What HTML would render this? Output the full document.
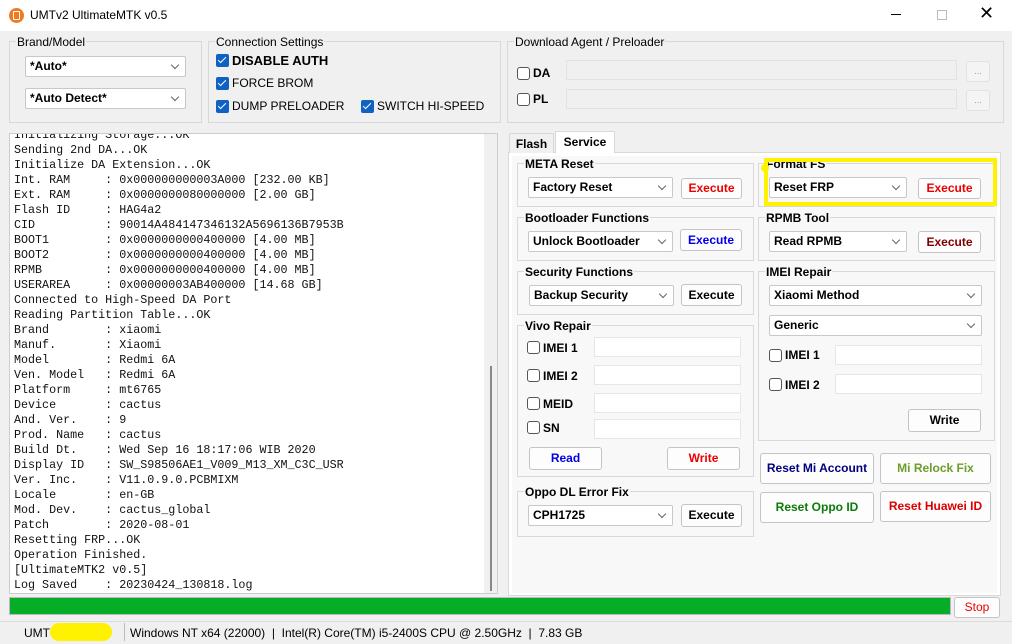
<!DOCTYPE html>
<html><head><meta charset="utf-8"><style>
*{box-sizing:border-box;margin:0;padding:0}
body{width:1012px;height:644px;background:#f0f0f0;position:relative;overflow:hidden;font-family:"Liberation Sans",sans-serif;font-size:12px;color:#000}
.a{position:absolute}
.g{position:absolute;border:1px solid #d8d8d8}
.gl{position:absolute;background:#f0f0f0;padding:0 1px;line-height:14px;white-space:nowrap}
.b{font-weight:bold}
.cb{position:absolute;background:#fff;border:1px solid #c8c8c8;border-radius:2px;font-weight:bold;font-size:12px;line-height:18px;padding-left:4px;white-space:nowrap}
.cb:after{content:"";position:absolute;right:7px;top:5px;width:5px;height:5px;border-right:1px solid #666;border-bottom:1px solid #666;transform:rotate(45deg)}
.bt{position:absolute;background:#fdfdfd;border:1px solid #c4c4c4;border-radius:3px;font-weight:bold;text-align:center;white-space:nowrap}
.ck{position:absolute;width:13px;height:13px;background:#0f62c2;border-radius:2px}
.ck:after{content:"";position:absolute;left:4px;top:1px;width:3px;height:7px;border-right:1.5px solid #fff;border-bottom:1.5px solid #fff;transform:rotate(45deg)}
.uc{position:absolute;width:13px;height:13px;border:1px solid #555;border-radius:3px;background:#fff}
.tf{position:absolute;background:#fff;border:1px solid #e6e6e6}
.log{position:absolute;left:9px;top:133px;width:489px;height:461px;background:#fff;border:1px solid #ccc;overflow:hidden}
.log pre{font-family:"Liberation Mono",monospace;font-size:11.7px;line-height:15px;position:absolute;left:4px;top:-6px;color:#111}
</style></head><body>
<!-- title bar -->
<div class="a" style="left:0;top:0;width:1012px;height:31px;background:#fff"></div>
<div class="a" style="left:9px;top:8px;width:15px;height:15px;border-radius:50%;background:#f07a20"></div>
<div class="a" style="left:13px;top:11px;width:7px;height:9px;border:1.5px solid #fff;border-radius:1px"></div>
<div class="a" style="left:30px;top:8px;font-size:12px">UMTv2 UltimateMTK v0.5</div>
<div class="a" style="left:891px;top:14px;width:10px;height:1px;background:#000"></div>
<div class="a" style="left:937px;top:10px;width:10px;height:10px;border:1px solid #bbb"></div>
<div class="a" style="left:979px;top:3px;font-size:18px;font-weight:300">✕</div>

<!-- Brand/Model -->
<div class="g" style="left:9px;top:41px;width:193px;height:82px"></div>
<div class="gl" style="left:16px;top:35px">Brand/Model</div>
<div class="cb" style="left:25px;top:56px;width:161px;height:21px">*Auto*</div>
<div class="cb" style="left:25px;top:88px;width:161px;height:21px">*Auto Detect*</div>

<!-- Connection -->
<div class="g" style="left:208px;top:41px;width:293px;height:82px"></div>
<div class="gl" style="left:215px;top:35px">Connection Settings</div>
<div class="ck" style="left:216px;top:54px"></div><div class="a b" style="left:232px;top:53px;font-size:13px">DISABLE AUTH</div>
<div class="ck" style="left:216px;top:77px"></div><div class="a" style="left:232px;top:76px">FORCE BROM</div>
<div class="ck" style="left:216px;top:100px"></div><div class="a" style="left:232px;top:99px">DUMP PRELOADER</div>
<div class="ck" style="left:361px;top:100px"></div><div class="a" style="left:377px;top:99px">SWITCH HI-SPEED</div>

<!-- DA -->
<div class="g" style="left:507px;top:41px;width:497px;height:82px"></div>
<div class="gl" style="left:514px;top:35px">Download Agent / Preloader</div>
<div class="uc" style="left:517px;top:67px"></div><div class="a b" style="left:533px;top:66px">DA</div>
<div class="a" style="left:566px;top:60px;width:391px;height:20px;border:1px solid #e2e2e2"></div>
<div class="a" style="left:966px;top:61px;width:24px;height:21px;border:1px solid #e2e2e2;border-radius:3px;background:#f4f4f4;font-size:9px;color:#999;text-align:center;line-height:19px">...</div>
<div class="uc" style="left:517px;top:93px"></div><div class="a b" style="left:533px;top:92px">PL</div>
<div class="a" style="left:566px;top:89px;width:391px;height:20px;border:1px solid #e2e2e2"></div>
<div class="a" style="left:966px;top:90px;width:24px;height:21px;border:1px solid #e2e2e2;border-radius:3px;background:#f4f4f4;font-size:9px;color:#999;text-align:center;line-height:19px">...</div>

<!-- log -->
<div class="log"><pre>Initializing Storage...OK
Sending 2nd DA...OK
Initialize DA Extension...OK
Int. RAM     : 0x000000000003A000 [232.00 KB]
Ext. RAM     : 0x0000000080000000 [2.00 GB]
Flash ID     : HAG4a2
CID          : 90014A484147346132A5696136B7953B
BOOT1        : 0x0000000000400000 [4.00 MB]
BOOT2        : 0x0000000000400000 [4.00 MB]
RPMB         : 0x0000000000400000 [4.00 MB]
USERAREA     : 0x00000003AB400000 [14.68 GB]
Connected to High-Speed DA Port
Reading Partition Table...OK
Brand        : xiaomi
Manuf.       : Xiaomi
Model        : Redmi 6A
Ven. Model   : Redmi 6A
Platform     : mt6765
Device       : cactus
And. Ver.    : 9
Prod. Name   : cactus
Build Dt.    : Wed Sep 16 18:17:06 WIB 2020
Display ID   : SW_S98506AE1_V009_M13_XM_C3C_USR
Ver. Inc.    : V11.0.9.0.PCBMIXM
Locale       : en-GB
Mod. Dev.    : cactus_global
Patch        : 2020-08-01
Resetting FRP...OK
Operation Finished.
[UltimateMTK2 v0.5]
Log Saved    : 20230424_130818.log</pre>
<div class="a" style="left:474px;top:0;width:14px;height:461px;background:#f0f0f0"></div>
<div class="a" style="left:480px;top:232px;width:2px;height:225px;background:#888"></div>
</div>

<!-- tabs -->
<div class="a" style="left:508px;top:152px;width:493px;height:444px;background:#fff;border:1px solid #d9d9d9"></div>
<div class="a b" style="left:509px;top:133px;width:45px;height:20px;border:1px solid #d9d9d9;border-bottom:none;background:#f0f0f0;text-align:center;line-height:20px">Flash</div>
<div class="a b" style="left:555px;top:131px;width:60px;height:22px;border:1px solid #d9d9d9;border-bottom:none;background:#fff;text-align:center;line-height:21px">Service</div>
<div class="a" style="left:512px;top:156px;width:485px;height:437px;background:#f8f8f8"></div>

<!-- META Reset -->
<div class="g" style="left:517px;top:163px;width:237px;height:44px"></div>
<div class="gl b" style="left:524px;top:157px;background:#f8f8f8">META Reset</div>
<div class="cb" style="left:528px;top:177px;width:145px;height:21px">Factory Reset</div>
<div class="bt" style="left:681px;top:178px;width:61px;height:21px;color:#e00;line-height:19px">Execute</div>

<!-- Format FS -->
<div class="g" style="left:758px;top:163px;width:237px;height:44px"></div>
<div class="gl b" style="left:765px;top:157px;background:#f8f8f8">Format FS</div>
<div class="a" style="left:764px;top:158px;width:233px;height:48px;border:4px solid #fff200"></div>
<div class="a" style="left:761px;top:164px;width:8px;height:8px;border-radius:50%;background:#fff200"></div>
<div class="cb" style="left:769px;top:177px;width:138px;height:21px">Reset FRP</div>
<div class="bt" style="left:918px;top:178px;width:63px;height:21px;color:#e00;line-height:19px">Execute</div>

<!-- Bootloader -->
<div class="g" style="left:517px;top:217px;width:237px;height:44px"></div>
<div class="gl b" style="left:524px;top:211px;background:#f8f8f8">Bootloader Functions</div>
<div class="cb" style="left:528px;top:231px;width:145px;height:21px">Unlock Bootloader</div>
<div class="bt" style="left:680px;top:229px;width:62px;height:22px;color:#0000e8;line-height:20px">Execute</div>

<!-- RPMB -->
<div class="g" style="left:758px;top:217px;width:237px;height:44px"></div>
<div class="gl b" style="left:765px;top:211px;background:#f8f8f8">RPMB Tool</div>
<div class="cb" style="left:769px;top:231px;width:138px;height:21px">Read RPMB</div>
<div class="bt" style="left:918px;top:231px;width:63px;height:22px;color:#800000;line-height:20px">Execute</div>

<!-- Security -->
<div class="g" style="left:517px;top:271px;width:237px;height:44px"></div>
<div class="gl b" style="left:524px;top:265px;background:#f8f8f8">Security Functions</div>
<div class="cb" style="left:529px;top:285px;width:145px;height:21px">Backup Security</div>
<div class="bt" style="left:681px;top:284px;width:61px;height:22px;line-height:20px">Execute</div>

<!-- IMEI Repair -->
<div class="g" style="left:758px;top:271px;width:237px;height:170px"></div>
<div class="gl b" style="left:765px;top:265px;background:#f8f8f8">IMEI Repair</div>
<div class="cb" style="left:769px;top:285px;width:213px;height:21px">Xiaomi Method</div>
<div class="cb" style="left:769px;top:315px;width:213px;height:21px">Generic</div>
<div class="uc" style="left:769px;top:349px"></div><div class="a b" style="left:785px;top:348px">IMEI 1</div>
<div class="tf" style="left:835px;top:345px;width:147px;height:20px"></div>
<div class="uc" style="left:769px;top:378px"></div><div class="a b" style="left:785px;top:378px">IMEI 2</div>
<div class="tf" style="left:835px;top:374px;width:147px;height:20px"></div>
<div class="bt" style="left:908px;top:409px;width:73px;height:23px;line-height:21px">Write</div>

<!-- Vivo -->
<div class="g" style="left:517px;top:325px;width:237px;height:152px"></div>
<div class="gl b" style="left:524px;top:319px;background:#f8f8f8">Vivo Repair</div>
<div class="uc" style="left:527px;top:341px"></div><div class="a b" style="left:543px;top:341px">IMEI 1</div>
<div class="tf" style="left:594px;top:337px;width:147px;height:20px"></div>
<div class="uc" style="left:527px;top:369px"></div><div class="a b" style="left:543px;top:369px">IMEI 2</div>
<div class="tf" style="left:594px;top:365px;width:147px;height:20px"></div>
<div class="uc" style="left:527px;top:397px"></div><div class="a b" style="left:543px;top:397px">MEID</div>
<div class="tf" style="left:594px;top:393px;width:147px;height:20px"></div>
<div class="uc" style="left:527px;top:421px"></div><div class="a b" style="left:543px;top:421px">SN</div>
<div class="tf" style="left:594px;top:419px;width:147px;height:20px"></div>
<div class="bt" style="left:529px;top:447px;width:73px;height:23px;color:#0000e8;line-height:21px">Read</div>
<div class="bt" style="left:667px;top:447px;width:73px;height:23px;color:#e00;line-height:21px">Write</div>

<!-- Oppo -->
<div class="g" style="left:517px;top:491px;width:237px;height:46px"></div>
<div class="gl b" style="left:524px;top:485px;background:#f8f8f8">Oppo DL Error Fix</div>
<div class="cb" style="left:528px;top:505px;width:145px;height:21px">CPH1725</div>
<div class="bt" style="left:681px;top:504px;width:61px;height:23px;line-height:21px">Execute</div>

<!-- big buttons -->
<div class="bt" style="left:760px;top:453px;width:114px;height:31px;color:#000080;line-height:29px">Reset Mi Account</div>
<div class="bt" style="left:880px;top:453px;width:111px;height:31px;color:#6b9e2a;line-height:29px">Mi Relock Fix</div>
<div class="bt" style="left:760px;top:492px;width:114px;height:31px;color:#0a7a0a;line-height:29px">Reset Oppo ID</div>
<div class="bt" style="left:880px;top:491px;width:111px;height:31px;color:#d00;line-height:29px">Reset Huawei ID</div>

<!-- progress -->
<div class="a" style="left:9px;top:597px;width:942px;height:18px;background:#06ad26;border:1px solid #bbb"></div>
<div class="bt" style="left:954px;top:597px;width:46px;height:21px;color:#e00;font-weight:normal;line-height:19px">Stop</div>

<!-- status bar -->
<div class="a" style="left:0;top:621px;width:1012px;height:1px;background:#dcdcdc"></div>
<div class="a" style="left:24px;top:626px;font-size:12px">UMT</div>
<div class="a" style="left:50px;top:623px;width:62px;height:18px;background:#fff200;border-radius:9px"></div>
<div class="a" style="left:124px;top:623px;width:1px;height:18px;background:#bbb"></div>
<div class="a" style="left:130px;top:626px;white-space:nowrap">Windows NT x64 (22000)&nbsp;&nbsp;|&nbsp;&nbsp;Intel(R) Core(TM) i5-2400S CPU @ 2.50GHz&nbsp;&nbsp;|&nbsp;&nbsp;7.83 GB</div>
</body></html>
